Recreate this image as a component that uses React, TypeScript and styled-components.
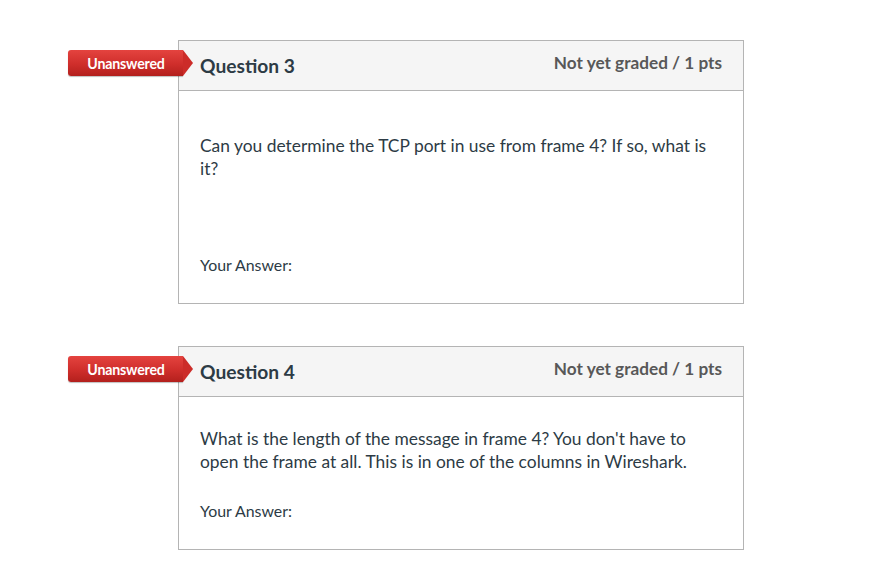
import React from 'react';
import styled, { createGlobalStyle } from 'styled-components';

const GlobalStyle = createGlobalStyle`
  html, body {
    margin: 0;
    padding: 0;
    background: #ffffff;
  }
  body {
    font-family: Lato, "Liberation Sans", sans-serif;
    color: #2d3b45;
  }
`;

const Page = styled.div`
  display: flex;
  flex-direction: column;
  gap: 42px;
  padding: 40px 0 0 178px;
`;

const Card = styled.div`
  position: relative;
  width: 564px;
  border: 1px solid #b4b4b4;
  background: #ffffff;
`;

const Badge = styled.div`
  position: absolute;
  left: -111px;
  top: 9px;
  height: 26px;
  width: 115px;
  display: flex;
  align-items: center;
  justify-content: center;
  padding-left: 1px;
  box-sizing: border-box;
  color: #ffffff;
  font-size: 14.2px;
  font-weight: 700;
  letter-spacing: -0.2px;
  border-radius: 3px 0 0 3px;
  background: linear-gradient(to bottom, #e4433f 0%, #cf2e2b 55%, #b3201d 100%);
  box-shadow: 0 1px 1px rgba(0, 0, 0, 0.25);

  &::after {
    content: '';
    position: absolute;
    right: -10px;
    top: 0;
    width: 0;
    height: 0;
    border-top: 13px solid transparent;
    border-bottom: 13px solid transparent;
    border-left: 10px solid #cc2c29;
  }
`;

const Header = styled.div`
  display: flex;
  align-items: center;
  justify-content: space-between;
  height: 49px;
  padding: 0 21px 0 21px;
  background: #f5f5f5;
  border-bottom: 1px solid #b4b4b4;
`;

const Title = styled.div`
  font-size: 19.2px;
  font-weight: 700;
  color: #2d3b45;
  margin-top: 0;
`;

const Points = styled.div`
  font-size: 17.2px;
  font-weight: 700;
  color: #585858;
  margin-top: -7px;
`;

const Body = styled.div<{ $lead: number }>`
  padding: ${(p) => p.$lead}px 21px 28px 21px;
`;

const QuestionText = styled.div<{ $gap: number }>`
  font-size: 17.4px;
  line-height: 23px;
  color: #2d3b45;
  margin-bottom: ${(p) => p.$gap}px;
`;

const AnswerLabel = styled.div`
  font-size: 15.9px;
  line-height: 20px;
  color: #2d3b45;
`;

interface Question {
  id: number;
  text: string;
  lead: number;
  gap: number;
}

const questions: Question[] = [
  {
    id: 3,
    text: 'Can you determine the TCP port in use from frame 4? If so, what is it?',
    lead: 43,
    gap: 75,
  },
  {
    id: 4,
    text: "What is the length of the message in frame 4? You don't have to open the frame at all. This is in one of the columns in Wireshark.",
    lead: 30,
    gap: 28,
  },
];

export default function App() {
  return (
    <>
      <GlobalStyle />
      <Page>
        {questions.map((q) => (
          <Card key={q.id}>
            <Badge>Unanswered</Badge>
            <Header>
              <Title>Question {q.id}</Title>
              <Points>Not yet graded / 1 pts</Points>
            </Header>
            <Body $lead={q.lead}>
              <QuestionText $gap={q.gap}>{q.text}</QuestionText>
              <AnswerLabel>Your Answer:</AnswerLabel>
            </Body>
          </Card>
        ))}
      </Page>
    </>
  );
}
